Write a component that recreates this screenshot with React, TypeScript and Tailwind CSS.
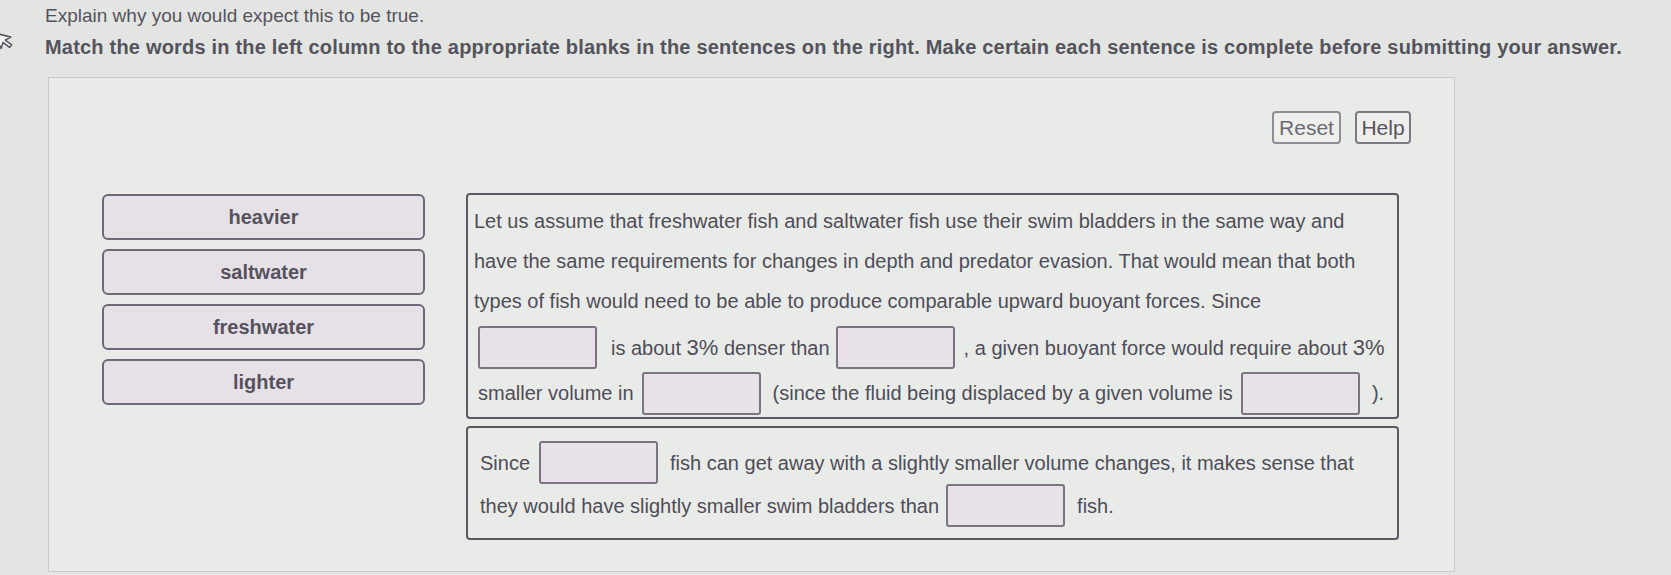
import React from "react";

const words = ["heavier", "saltwater", "freshwater", "lighter"];

function Blank({ className = "" }: { className?: string }) {
  return (
    <span
      className={`inline-block h-[43px] w-[119px] shrink-0 rounded-[3px] border-2 border-[#7a7480] bg-[#e8e1e7] ${className}`}
    />
  );
}

function Cursor() {
  return (
    <svg
      className="absolute left-[-5px] top-[26px]"
      width="20"
      height="28"
      viewBox="0 0 20 28"
    >
      <path
        d="M2 2 L2 20 L6.5 15.5 L10 23 L13 21.8 L9.6 14.5 L16 14.5 Z"
        fill="#f4f5f3"
        stroke="#55535c"
        strokeWidth="1.5"
        strokeLinejoin="round"
        transform="rotate(-28 9 13)"
      />
    </svg>
  );
}

export default function App() {
  return (
    <div className="relative h-[575px] w-[1671px] overflow-hidden bg-[#e3e5e2] font-['Liberation_Sans',Arial,sans-serif] text-[#55535c]">
      <Cursor />

      {/* Instructions */}
      <div className="pl-[45px] pt-[4px]">
        <p className="text-[19px] leading-[24px]">Explain why you would expect this to be true.</p>
        <p className="mt-[7px] text-[20px] font-bold leading-[24px] tracking-[0.2px]">
          Match the words in the left column to the appropriate blanks in the sentences on the right. Make certain each
          sentence is complete before submitting your answer.
        </p>
      </div>

      {/* Activity panel */}
      <div className="ml-[48px] mt-[18px] h-[495px] w-[1407px] border border-[#c9cac8] bg-[#e9ebe8]">
        <div className="flex justify-end gap-[14px] pr-[43px] pt-[33px]">
          <button className="h-[33px] w-[69px] rounded-[4px] border-2 border-[#8f8c94] bg-[#eeefed] text-[21px] leading-none text-[#6c6973]">
            Reset
          </button>
          <button className="h-[33px] w-[56px] rounded-[4px] border-2 border-[#7d7a83] bg-[#eeefed] text-[21px] leading-none text-[#56535e]">
            Help
          </button>
        </div>

        <div className="mt-[49px] flex gap-[41px] pl-[53px]">
          {/* Word bank */}
          <div className="mt-[1px] flex w-[323px] flex-col gap-[9px]">
            {words.map((w) => (
              <div
                key={w}
                className="flex h-[46px] items-center justify-center rounded-[6px] border-2 border-[#6f6878] bg-[#e6e1e6] text-[20px] font-bold text-[#57525d]"
              >
                {w}
              </div>
            ))}
          </div>

          {/* Sentences */}
          <div className="flex w-[933px] flex-col gap-[7px] text-[20px] text-[#4f4d57]">
            <div className="rounded-[4px] border-2 border-[#5d5865] pb-[1px] pl-[6px] pt-[6px]">
              <div className="h-[40px] whitespace-nowrap leading-[40px]">
                Let us assume that freshwater fish and saltwater fish use their swim bladders in the same way and
              </div>
              <div className="h-[40px] whitespace-nowrap leading-[40px]">
                have the same requirements for changes in depth and predator evasion. That would mean that both
              </div>
              <div className="h-[40px] whitespace-nowrap leading-[40px]">
                types of fish would need to be able to produce comparable upward buoyant forces. Since
              </div>
              <div className="mt-[3px] flex h-[46px] items-center whitespace-nowrap">
                <Blank className="ml-[4px]" />
                <span className="ml-[14px]">
                  is about <span className="text-[22px]">3%</span> denser than
                </span>
                <Blank className="ml-[6px]" />
                <span className="ml-[9px]">
                  , a given buoyant force would require about <span className="text-[22px]">3%</span>
                </span>
              </div>
              <div className="flex h-[46px] items-center whitespace-nowrap">
                <span className="ml-[4px]">smaller volume in</span>
                <Blank className="ml-[8px]" />
                <span className="ml-[12px]">(since the fluid being displaced by a given volume is</span>
                <Blank className="ml-[8px]" />
                <span className="ml-[12px]">).</span>
              </div>
            </div>

            <div className="rounded-[4px] border-2 border-[#5d5865] pb-[11px] pl-[12px] pt-[13px]">
              <div className="flex h-[43px] items-center whitespace-nowrap">
                <span>Since</span>
                <Blank className="ml-[9px] w-[117px]" />
                <span className="ml-[12px]">
                  fish can get away with a slightly smaller volume changes, it makes sense that
                </span>
              </div>
              <div className="flex h-[43px] items-center whitespace-nowrap">
                <span>they would have slightly smaller swim bladders than</span>
                <Blank className="ml-[7px]" />
                <span className="ml-[12px]">fish.</span>
              </div>
            </div>
          </div>
        </div>
      </div>
    </div>
  );
}
